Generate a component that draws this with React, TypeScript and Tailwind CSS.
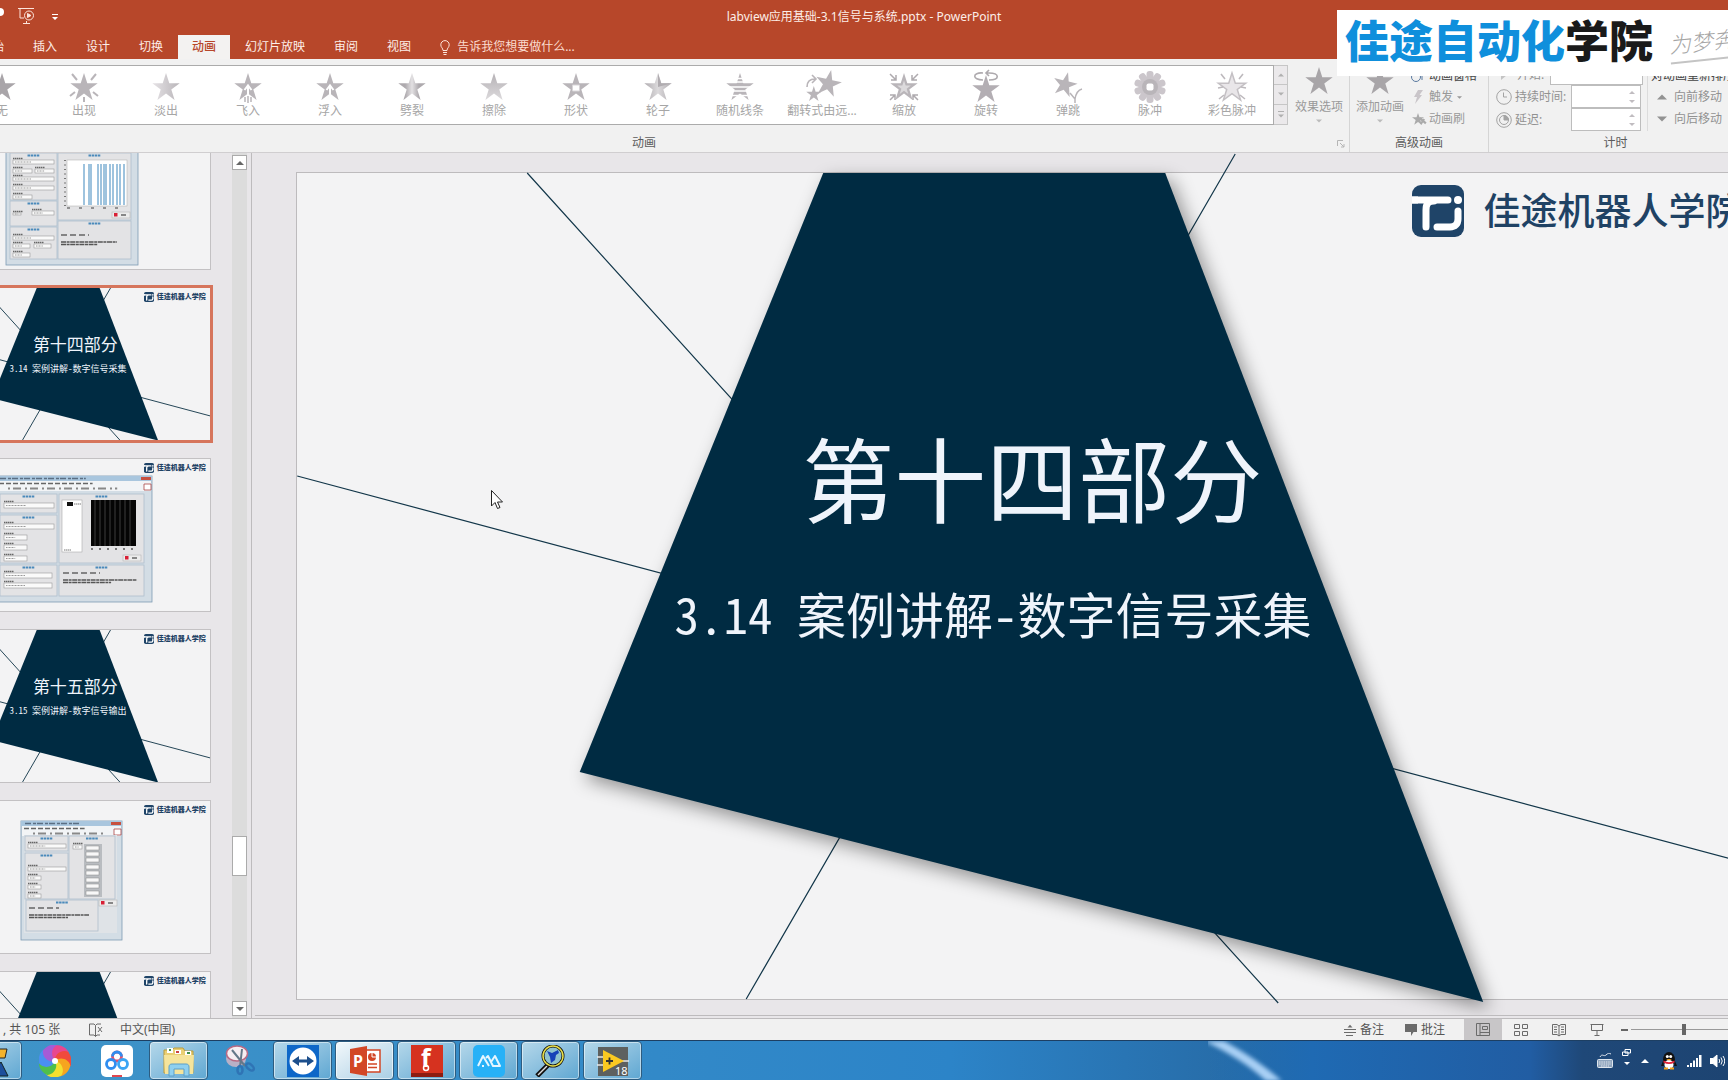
import type { ReactNode } from "react";

const STAR =
  "M16 2l3.3 10.2h10.4l-8.4 6.3 3.3 10.5L16 22.6 7.4 29l3.3-10.5-8.4-6.3h10.4z";

const tabsBefore = ["开始", "插入", "设计", "切换"];
const tabsAfter = ["幻灯片放映", "审阅", "视图"];

const Star = ({ fill = "#b9b5b9" }: { fill?: string }) => (
  <path d={STAR} fill={fill} />
);

interface Effect {
  label: string;
  icon: ReactNode;
}

const effects: Effect[] = [
  { label: "无", icon: <Star fill="#a9a5a9" /> },
  {
    label: "出现",
    icon: (
      <>
        <Star />
        <path
          d="M4 3l5 6M28 3l-5 6M2 25l5-4M30 25l-5-4M16 26v5"
          stroke="#b9b5b9"
          strokeWidth="2"
        />
      </>
    ),
  },
  { label: "淡出", icon: <Star fill="url(#fadeH)" /> },
  {
    label: "飞入",
    icon: (
      <>
        <Star />
        <path
          d="M16 25V15M12.500 19l3.500-4.500 3.500 4.500"
          stroke="#fff"
          strokeWidth="2"
          fill="none"
        />
        <path d="M13 26v5M16 25v7M19 26v5" stroke="#b9b5b9" strokeWidth="1.500" />
      </>
    ),
  },
  {
    label: "浮入",
    icon: (
      <>
        <Star />
        <path
          d="M16 26V15M12.500 19l3.500-4.500 3.500 4.500"
          stroke="#fff"
          strokeWidth="2"
          fill="none"
        />
      </>
    ),
  },
  { label: "劈裂", icon: <Star fill="url(#splitH)" /> },
  { label: "擦除", icon: <Star fill="url(#fadeV)" /> },
  {
    label: "形状",
    icon: (
      <>
        <Star />
        <path d="M12.500 14h7v6h-7z" fill="#fff" stroke="#d8d5d8" />
      </>
    ),
  },
  {
    label: "轮子",
    icon: (
      <>
        <Star fill="url(#fadeL)" />
        <path d="M16 2l3.300 10.200h10.400L16 16z" fill="#b0acb0" />
      </>
    ),
  },
  {
    label: "随机线条",
    icon: (
      <>
        <Star />
        <path d="M2 7.500h28M2 11h28M2 16h28M2 20h28M2 24.500h28" stroke="#fff" strokeWidth="1.300" />
      </>
    ),
  },
  {
    label: "翻转式由远...",
    icon: (
      <>
        <path d={STAR} fill="#b9b5b9" transform="translate(7 -3) rotate(12 16 16) scale(.95)" />
        <path d={STAR} fill="#b9b5b9" transform="translate(-1 14) scale(.55)" />
        <path d="M1 16c0-6 3-8 8-8M6 4l4 4-4 4" stroke="#b9b5b9" strokeWidth="1.600" fill="none" />
      </>
    ),
  },
  {
    label: "缩放",
    icon: (
      <>
        <Star />
        <path d={STAR} fill="#dcdadc" transform="translate(8 8.500) scale(.5)" />
        <path
          d="M2 3l6 6M8 4v5H3M30 3l-6 6M24 4v5h5M2 29l5-5M2 24h5v5M30 29l-5-5M30 24h-5v5"
          stroke="#aeaaae"
          strokeWidth="1.500"
          fill="none"
        />
      </>
    ),
  },
  {
    label: "旋转",
    icon: (
      <>
        <path d={STAR} fill="#b3aeb3" transform="translate(0 2)" />
        <path
          d="M13 9C2 9 2 1 13 2M19 9c11 0 11-7 0-7h-3M19-1l-3 3 3 3"
          stroke="#aeaaae"
          strokeWidth="1.600"
          fill="none"
        />
      </>
    ),
  },
  {
    label: "弹跳",
    icon: (
      <>
        <path d={STAR} fill="#b9b5b9" transform="translate(-1 -1) rotate(14 14 14) scale(.88)" />
        <path d="M18 22l5 6c1-6 3-9 7-10M23 28v4" stroke="#b9b5b9" strokeWidth="1.500" fill="none" />
      </>
    ),
  },
  {
    label: "脉冲",
    icon: (
      <>
        {[0, 36, 72, 108, 144].map((angle) => (
          <rect
            key={angle}
            x="12.500"
            y="0"
            width="7"
            height="32"
            rx="3"
            fill="#cbc6cb"
            transform={`rotate(${angle} 16 16)`}
          />
        ))}
        <circle cx="16" cy="16" r="8" fill="#b9b5b9" />
        <rect x="12.500" y="12.500" width="7" height="7" rx="2" fill="#fff" />
      </>
    ),
  },
  {
    label: "彩色脉冲",
    icon: (
      <>
        <path d={STAR} fill="#e9e6e9" stroke="#c4c0c4" strokeWidth="1.500" />
        <path
          d="M5 3l4 5M27 3l-4 5M2 17l5-1M30 17l-5-1M3 28l5-4M29 28l-5-4"
          stroke="#bdb9bd"
          strokeWidth="1.600"
        />
      </>
    ),
  },
];

const Caret = ({ up = false, className = "" }: { up?: boolean; className?: string }) => (
  <svg viewBox="0 0 8 4" className={`h-1 w-2 ${className}`} aria-hidden="true">
    <path d={up ? "M0 4l4-4 4 4z" : "M0 0l4 4 4-4z"} fill="currentColor" />
  </svg>
);

const Tab = ({ label, active = false }: { label: string; active?: boolean }) => (
  <button
    className={`h-6 shrink-0 px-[14px] text-xs ${active ? "bg-[#f3f2f1] font-medium text-[#b7472a]" : "text-[#fdeee8]"}`}
  >
    {label}
  </button>
);

const TitleBar = () => (
  <header className="bg-[#b7472a] text-white">
    <div className="relative h-[35px]">
      <div className="absolute top-2 left-0 flex items-start gap-[18px]">
        <div className="flex gap-[14px]">
          <span className="h-2 w-1 rounded-r-full bg-white" />
          <svg viewBox="0 0 16 16" className="h-4 w-4" fill="none" stroke="#fde5dc" aria-hidden="true">
            <path d="M0 .5h16M2 1v9h4M5 15.500h7M8.500 13v2" />
            <circle cx="11" cy="7.500" r="4.500" />
            <path d="M9.500 5.500l3.500 2-3.500 2z" fill="#fde5dc" />
          </svg>
        </div>
        <svg viewBox="0 0 6 6" className="mt-[6px] h-[6px] w-[6px]" fill="#fff" aria-hidden="true">
          <path d="M0 0h6v1H0zM0 3h6L3 6z" />
        </svg>
      </div>
      <h1 className="text-center text-xs leading-[34px] text-[#fdeee8]">
        labview应用基础-3.1信号与系统.pptx - PowerPoint
      </h1>
    </div>
    <nav className="-ml-[34px] flex items-center gap-px">
      {tabsBefore.map((label) => (
        <Tab key={label} label={label} />
      ))}
      <Tab label="动画" active />
      {tabsAfter.map((label) => (
        <Tab key={label} label={label} />
      ))}
      <button className="flex h-6 items-center gap-[7px] pl-[14px] text-xs text-[#fbdcd0]">
        <svg viewBox="0 0 10 15" className="h-[15px] w-[10px]" fill="none" stroke="#fde5dc" aria-hidden="true">
          <path d="M3 10.500C3 8 .8 7.500.8 4.800a4.200 4.200 0 018.400 0C9.200 7.500 7 8 7 10.500zM3 12.500h4M3.500 14.500h3" />
        </svg>
        告诉我您想要做什么...
      </button>
    </nav>
  </header>
);

interface GroupProps {
  label: string;
  className?: string;
  labelClassName?: string;
  children: ReactNode;
}

const Group = ({ label, className = "", labelClassName = "", children }: GroupProps) => (
  <section className={`flex shrink-0 flex-col justify-between ${className}`}>
    {children}
    <h2 className={`text-center text-xs leading-[18px] text-[#5c5c5c] ${labelClassName}`}>{label}</h2>
  </section>
);

const Gallery = () => (
  <div className="flex h-[60px]">
    <div className="-ml-[39px] flex border-y border-r border-[#ababab] bg-white">
      {effects.map((effect) => (
        <button key={effect.label} className="flex w-[82px] shrink-0 flex-col items-center pt-[5px]">
          <svg viewBox="0 0 32 32" className="h-8 w-8 overflow-visible" aria-hidden="true">
            {effect.icon}
          </svg>
          <span className="text-xs leading-4 whitespace-nowrap text-[#a6a6a6]">{effect.label}</span>
        </button>
      ))}
    </div>
    <div className="grid w-[14px] grid-rows-3 divide-y divide-[#c6c6c6] border-y border-r border-[#c6c6c6] bg-[#ebe9eb] text-[#b0b0b0]">
      <button aria-label="上一行" className="flex items-center justify-center">
        <Caret up className="w-[6px]" />
      </button>
      <button aria-label="下一行" className="flex items-center justify-center">
        <Caret className="w-[6px]" />
      </button>
      <button aria-label="其他" className="flex flex-col items-center justify-center gap-[2px]">
        <span className="h-px w-[6px] bg-[#b0b0b0]" />
        <Caret className="w-[6px]" />
      </button>
    </div>
  </div>
);

const LargeButton = ({ label }: { label: string }) => (
  <button className="flex flex-col items-center text-xs text-[#999]">
    <svg viewBox="0 0 32 32" className="h-8 w-8" aria-hidden="true">
      <Star fill="#a8a5a8" />
    </svg>
    <span className="leading-5">{label}</span>
    <Caret className="mt-[2px] w-[6px] text-[#bbb]" />
  </button>
);

const Clock = ({ filled = false }: { filled?: boolean }) => (
  <svg viewBox="0 0 16 16" className="h-4 w-4" fill="none" stroke="#a3a3a3" aria-hidden="true">
    <circle cx="8" cy="8" r="7.300" />
    {filled ? <path d="M8 8V3.500A4.500 4.500 0 0112.500 8z" fill="#a3a3a3" /> : <path d="M7.500 3.500V8H11" />}
    {filled && <circle cx="8" cy="8" r="4.500" />}
  </svg>
);

const Spinner = ({ id }: { id: string }) => (
  <div className="flex h-[23px] w-[70px] border border-[#bdbdbd] bg-white">
    <input id={id} type="text" className="w-0 min-w-0 flex-1 bg-transparent px-1 text-xs outline-none" />
    <div className="flex w-4 flex-col items-center justify-center gap-[6px] text-[#c0bcc0]">
      <Caret up className="h-[3px] w-[6px]" />
      <Caret className="h-[3px] w-[6px]" />
    </div>
  </div>
);

const Ribbon = () => (
  <div className="flex h-[94px] overflow-hidden border-b border-[#d0ced0] bg-[#f1f1f1] pt-[6px]">
    <Group label="动画" className="relative w-[1349px]" labelClassName="pr-[61px]">
      <div className="flex items-start justify-between pr-[6px]">
        <Gallery />
        <LargeButton label="效果选项" />
      </div>
      <button aria-label="动画选项" className="absolute right-1 bottom-1">
        <svg viewBox="0 0 8 8" className="h-2 w-2" fill="none" stroke="#b5b5b5" aria-hidden="true">
          <path d="M.5 6V.5H6M3 3l4 4M7 4v3H4" />
        </svg>
      </button>
    </Group>
    <Group label="高级动画" className="w-[139px] border-l border-[#d5d5d5]">
      <div className="flex gap-[7px] pl-[6px]">
        <LargeButton label="添加动画" />
        <div className="flex flex-col text-xs text-[#999]">
          <button className="flex h-[21px] items-center gap-1 text-[#444]">
            <svg viewBox="0 0 14 14" className="h-[14px] w-[14px]" fill="none" stroke="#5a7aa0" aria-hidden="true">
              <circle cx="5" cy="8" r="4.500" />
              <path d="M11 5v6" />
            </svg>
            动画窗格
          </button>
          <button className="flex h-[22px] items-center gap-1">
            <svg viewBox="0 0 14 14" className="h-[14px] w-[14px]" fill="#c9c5c9" aria-hidden="true">
              <path d="M7 0h5L8.500 5H11l-7 9 2-7H3z" />
            </svg>
            触发
            <Caret className="h-[3px] w-[5px]" />
          </button>
          <button className="flex h-[22px] items-center gap-1">
            <svg viewBox="0 0 32 32" className="h-[14px] w-[14px] overflow-visible" aria-hidden="true">
              <Star fill="#aaa" />
              <path d="M20 14l14 12M30 16l-8 12" stroke="#aaa" strokeWidth="5" />
            </svg>
            动画刷
          </button>
        </div>
      </div>
    </Group>
    <Group label="计时" className="w-[254px] border-l border-[#d5d5d5]">
      <div className="flex gap-1 pl-[7px] text-xs text-[#929292]">
        <div className="flex flex-col">
          <div className="flex h-5 items-center gap-[5px]">
            <span className="flex w-4 justify-center">
              <svg viewBox="0 0 6 10" className="h-[10px] w-[6px]" fill="#c4c4c4" aria-hidden="true">
                <path d="M0 0l6 5-6 5z" />
              </svg>
            </span>
            <label htmlFor="start" className="w-7">
              开始:
            </label>
            <select id="start" className="h-5 w-[93px] appearance-none border border-[#bdbdbd] bg-white" />
          </div>
          <div className="flex h-[23px] items-center gap-[3px]">
            <Clock />
            <label htmlFor="duration" className="w-[53px]">
              持续时间:
            </label>
            <Spinner id="duration" />
          </div>
          <div className="flex h-[23px] items-center gap-[3px]">
            <Clock filled />
            <label htmlFor="delay" className="w-[53px]">
              延迟:
            </label>
            <Spinner id="delay" />
          </div>
        </div>
        <div className="flex flex-col border-l border-[#dcdcdc] pl-[3px] whitespace-nowrap">
          <p className="h-[21px] leading-[21px] text-[#444]">对动画重新排序</p>
          <button className="flex h-[22px] items-center gap-[7px] pl-[6px]">
            <Caret up className="h-[6px] w-[10px]" />
            向前移动
          </button>
          <button className="flex h-[22px] items-center gap-[7px] pl-[6px]">
            <Caret className="h-[6px] w-[10px]" />
            向后移动
          </button>
        </div>
      </div>
    </Group>
  </div>
);

// Channel watermark that floats over the window's top right corner
const Watermark = () => (
  <div className="absolute top-[10px] right-0 flex h-[66px] w-[391px] items-center overflow-hidden bg-white pl-2 whitespace-nowrap">
    <p className="pb-1 text-[44px] leading-none font-black text-[#1a1a1a]">
      <span className="text-[#0f8fdc]">佳途自动化</span>学院
    </p>
    <p className="ml-4 -rotate-6 border-b-2 border-[#c4c4c4] pb-1 text-[22px] leading-7 font-light text-[#a5a5a5] italic">
      为梦奔跑
    </p>
  </div>
);

const LogoMark = ({ className = "" }: { className?: string }) => (
  <svg viewBox="0 0 52 52" className={className} aria-hidden="true">
    <rect width="52" height="52" rx="9" fill="#1f4468" />
    <path
      d="M0 15h36M14 42V25c0-6 2-9 8-9M25 42h13c5 0 8-3 8-8V26"
      fill="none"
      stroke="#fff"
      strokeWidth="7"
      strokeLinecap="round"
    />
    <path d="M0 11.500h6v7H0z" fill="#fff" />
    <circle cx="46" cy="15" r="4" fill="#fff" />
  </svg>
);

const Logo = ({ small = false }: { small?: boolean }) => (
  <div
    className={`absolute top-[1.5%] flex items-center whitespace-nowrap text-[#1f4264] ${small ? "left-[75.5%] gap-[3px]" : "left-[75.9%] gap-5"}`}
  >
    <LogoMark className={small ? "h-[10px] w-[10px]" : "h-[52px] w-[52px]"} />
    <span className={small ? "text-[7px] leading-[14px] font-black" : "text-[37px] leading-[52px] font-medium"}>
      佳途机器人学院
    </span>
  </div>
);

interface SectionSlideProps {
  title?: string;
  number?: string;
  topic?: string;
  small?: boolean;
}

const SectionSlide = ({ title, number, topic, small = false }: SectionSlideProps) => (
  <>
    <svg
      viewBox="0 0 1468 826"
      className={`absolute inset-0 h-full w-full ${small ? "overflow-hidden" : "overflow-visible"}`}
      aria-hidden="true"
    >
      <path
        d="M230 0l751 830M0 303l1468 392M938-19L449 826"
        stroke="#123649"
        strokeWidth={small ? 5 : 1.2}
        fill="none"
      />
      <path
        d="M526 0h342l318 829-903.500-230z"
        fill="#002b42"
        className={small ? "" : "drop-shadow-[6px_7px_9px_rgba(0,0,0,0.4)]"}
      />
    </svg>
    {title && (
      <p
        className={`absolute top-[31.7%] left-[34.4%] leading-none whitespace-nowrap text-[#eff4fb] ${small ? "text-[17px]" : "text-[92px]"}`}
      >
        {title}
      </p>
    )}
    {topic && (
      <p
        className={`absolute top-[50.3%] left-[25.7%] font-['Noto_Sans_CJK_SC',sans-serif] leading-none whitespace-pre text-[#eff4fb] [font-feature-settings:'hwid'] ${small ? "text-[9px]" : "text-[49px]"}`}
      >
        {number} {topic}
      </p>
    )}
    <Logo small={small} />
  </>
);

type Box = [x: number, y: number, w: number, h: number];

const Panels = ({ boxes }: { boxes: Box[] }) =>
  boxes.map(([x, y, w, h]) => (
    <g key={`${x}-${y}`}>
      <rect x={x} y={y} width={w} height={h} fill="#e3e3e5" stroke="#aebfcd" strokeWidth=".8" />
      <path
        d={`M${x + w / 2 - 6} ${y + 2.5}h12`}
        stroke="#4a8abb"
        strokeWidth="2"
        strokeDasharray="2.500 .6"
      />
    </g>
  ));

const Fields = ({ boxes }: { boxes: Box[] }) =>
  boxes.map(([x, y, w, h]) => (
    <g key={`${x}-${y}`}>
      <path d={`M${x} ${y - 1.6}h10`} stroke="#666" strokeWidth="1.500" strokeDasharray="1.500 .5" />
      <rect x={x} y={y} width={w} height={h} fill="#fafafa" stroke="#999" strokeWidth=".6" />
      <path d={`M${x + 2} ${y + h / 2}h${w * 0.4}`} stroke="#999" strokeDasharray="1 .5" />
    </g>
  ));

const WindowFrame = ({ box: [x, y, w, h] }: { box: Box }) => (
  <>
    <rect x={x} y={y} width={w} height={h} fill="#d3dde5" stroke="#7d9bb5" strokeWidth=".8" />
    <rect x={x} y={y} width={w} height="5" fill="#a9c6de" />
    <path d={`M${x + 4} ${y + 2.5}h${w * 0.55}`} stroke="#5b6f84" strokeWidth="1.500" strokeDasharray="6 2 3 1" />
    <path d={`M${x + w - 11} ${y + 2.5}h10`} stroke="#c7503f" strokeWidth="3" />
    <rect x={x + 1} y={y + 5} width={w - 2} height="10" fill="#f2f4f6" />
    <path d={`M${x + 3} ${y + 7.5}h${w * 0.6}`} stroke="#666" strokeWidth="1.500" strokeDasharray="5 2" />
    <path d={`M${x + 12} ${y + 12.5}h${w * 0.7}`} stroke="#888" strokeWidth="2" strokeDasharray="2 3 8 4" />
    <path d={`M${x + w - 8} ${y + 8}h7v6h-7z`} fill="#fff" stroke="#a44" strokeWidth=".8" />
  </>
);

const TextLines = ({ x, y, w }: { x: number; y: number; w: number }) => (
  <>
    <path d={`M${x} ${y}h${w * 0.5}`} stroke="#666" strokeWidth="1.500" strokeDasharray="6 3" />
    <path
      d={`M${x} ${y + 7}h${w}M${x} ${y + 9.5}h${w * 0.65}`}
      stroke="#555"
      strokeWidth="1.300"
      strokeDasharray="5 .6 3 .6"
    />
  </>
);

const Stop = ({ x, y }: { x: number; y: number }) => (
  <>
    <rect x={x} y={y} width="18" height="6" fill="#ececec" stroke="#b5b5b5" strokeWidth=".6" />
    <rect x={x + 2} y={y + 1} width="3.500" height="3.500" fill="#d81f35" />
    <path d={`M${x + 9} ${y + 3}h5`} stroke="#666" strokeWidth="1.500" />
  </>
);

const WaveformSlide = () => (
  <svg viewBox="0 0 270 152" className="h-full w-full" aria-hidden="true">
    <WindowFrame box={[66, 6, 132, 142]} />
    <Panels boxes={[[70, 36, 47, 47], [70, 84, 47, 25], [70, 110, 47, 32], [118, 36, 73, 67], [118, 104, 73, 38]]} />
    <Fields
      boxes={[
        [73, 43, 41, 4],
        [73, 52, 19, 4],
        [95, 52, 19, 4],
        [73, 60, 41, 4],
        [73, 69, 41, 4],
        [73, 78, 19, 4],
        [92, 94, 22, 4],
        [73, 96, 8, 2],
        [73, 119, 41, 4],
        [73, 127, 17, 4],
        [94, 127, 17, 4],
        [73, 136, 17, 4],
      ]}
    />
    <rect x="127" y="43" width="60" height="46" fill="#fff" stroke="#aaa" strokeWidth=".5" />
    <path
      d="M144 47v41M149 47v41M151 47v41M158 47v41M161 47v41M164 47v41M166 47v41M170 47v41M173 47v41M177 47v41M180 47v41M184 47v41"
      stroke="#7fb0d3"
      strokeWidth="1.500"
    />
    <path d="M125 43v46" stroke="#777" strokeWidth="2" strokeDasharray="1 3.500" />
    <path d="M127 91h60" stroke="#777" strokeWidth="1.500" strokeDasharray="3 9" />
    <Stop x={172} y={95} />
    <TextLines x={121} y={118} w={56} />
  </svg>
);

const DigitalInputSlide = () => (
  <svg viewBox="0 0 270 152" className="h-full w-full" aria-hidden="true">
    <WindowFrame box={[56, 17, 156, 126]} />
    <Panels boxes={[[60, 35, 57, 19], [60, 56, 57, 48], [60, 106, 57, 31], [119, 35, 85, 69], [119, 106, 85, 31]]} />
    <Fields
      boxes={[
        [64, 44, 50, 5],
        [64, 65, 50, 5],
        [64, 76, 23, 5],
        [64, 86, 23, 5],
        [64, 97, 23, 5],
        [64, 114, 48, 5],
        [64, 124, 48, 5],
      ]}
    />
    <rect x="122" y="41" width="20" height="52" fill="#fff" stroke="#aaa" strokeWidth=".6" />
    <path d="M127 43h6v4h-6z" fill="#111" />
    <path d="M134 45h7M124 91h7" stroke="#777" strokeDasharray="1.500 .5" />
    <rect x="151" y="41" width="45" height="46" fill="#050505" />
    <path d="M155 41v46M160 41v46M165 41v46M170 41v46M175 41v46M180 41v46M185 41v46M190 41v46" stroke="#4b4b4b" strokeWidth=".8" />
    <path d="M151 90h45" stroke="#555" strokeWidth="1.500" strokeDasharray="2 6" />
    <Stop x={183} y={96} />
    <TextLines x={123} y={114} w={74} />
  </svg>
);

const DigitalOutputSlide = () => (
  <svg viewBox="0 0 270 152" className="h-full w-full" aria-hidden="true">
    <WindowFrame box={[81, 20, 101, 119]} />
    <rect x="84" y="34" width="93" height="98" fill="#dfe3e7" />
    <Panels boxes={[[85, 35, 43, 15], [85, 52, 43, 46], [129, 35, 46, 63], [86, 99, 72, 31]]} />
    <Fields
      boxes={[
        [88, 43, 38, 4],
        [88, 66, 38, 4],
        [88, 75, 13, 4],
        [88, 84, 13, 4],
        [88, 93, 13, 4],
        [133, 44, 9, 4],
      ]}
    />
    <rect x="144" y="43" width="18" height="53" fill="#b9bcc0" />
    {[45, 51, 57, 64, 70, 77, 83, 90].map((y) => (
      <rect key={y} x="146" y={y} width="13" height="4" fill="#f8f8f8" stroke="#888" strokeWidth=".5" />
    ))}
    <Stop x={159} y={99} />
    <TextLines x={89} y={107} w={60} />
  </svg>
);

const thumbnails = [
  { id: "waveform", content: <WaveformSlide /> },
  {
    id: "part14",
    selected: true,
    content: <SectionSlide small title="第十四部分" number="3.14" topic="案例讲解-数字信号采集" />,
  },
  {
    id: "input",
    content: (
      <>
        <DigitalInputSlide />
        <Logo small />
      </>
    ),
  },
  {
    id: "part15",
    content: <SectionSlide small title="第十五部分" number="3.15" topic="案例讲解-数字信号输出" />,
  },
  {
    id: "output",
    content: (
      <>
        <DigitalOutputSlide />
        <Logo small />
      </>
    ),
  },
  { id: "part16", content: <SectionSlide small /> },
];

const Sidebar = () => (
  <aside className="flex w-[252px] shrink-0 border-r border-[#bdbbbd]">
    <div className="flex w-[232px] flex-col items-end gap-[19px] overflow-hidden pr-[22px]">
      {thumbnails.map((thumb, index) => (
        <button
          key={thumb.id}
          aria-label={`幻灯片 ${thumb.id}`}
          className={`relative h-[152px] w-[270px] shrink-0 bg-[#f3f3f4] ${index === 0 ? "-mt-9" : ""} ${thumb.selected ? "outline-3 outline-[#d6755c]" : "outline outline-[#c3c1c3]"}`}
        >
          {thumb.content}
        </button>
      ))}
    </div>
    <div className="flex w-[15px] flex-col bg-[#dcdcdc] py-[2px]">
      <button aria-label="向上滚动" className="flex h-[15px] items-center justify-center border border-[#ababab] bg-white text-[#666]">
        <Caret up />
      </button>
      <div className="flex-[665]" />
      <div className="h-10 border border-[#ababab] bg-white" />
      <div className="flex-[125]" />
      <button aria-label="向下滚动" className="flex h-[15px] items-center justify-center border border-[#ababab] bg-white text-[#666]">
        <Caret />
      </button>
    </div>
  </aside>
);

const Editor = () => (
  <main className="relative mb-[2px] ml-[3px] min-w-0 flex-1 overflow-hidden border-b border-[#bdbbbd] pt-5 pb-4 pl-[42px]">
    <div className="relative aspect-video h-full bg-[#f3f3f4] outline outline-[#bdbbbd]">
      <SectionSlide title="第十四部分" number="3.14" topic="案例讲解-数字信号采集" />
    </div>
    <svg viewBox="0 0 12 20" className="absolute top-[337px] left-[236px] h-5 w-3" aria-hidden="true">
      <path d="M.5.500v15.500l3.500-3.500 2.500 6 2.500-1-2.500-5.500h5z" fill="#fff" stroke="#222" />
    </svg>
  </main>
);

const ViewButton = ({ label, active = false, d }: { label: string; active?: boolean; d: string }) => (
  <button aria-label={label} className={`flex h-full w-[38px] items-center justify-center ${active ? "bg-[#c8c6c8]" : ""}`}>
    <svg viewBox="0 0 14 14" className="h-[14px] w-[14px]" fill="none" stroke="#6b6b6b" aria-hidden="true">
      <path d={d} />
    </svg>
  </button>
);

const StatusBar = () => (
  <footer className="flex h-[22px] shrink-0 items-center justify-between overflow-hidden border-t border-[#bdbbbd] bg-[#f1f1f1] text-xs text-[#555]">
    <div className="flex items-center pl-[3px]">
      <span className="w-[86px]">, 共 105 张</span>
      <svg viewBox="0 0 15 14" className="h-[14px] w-[15px]" fill="none" stroke="#6b6b6b" aria-hidden="true">
        <path d="M6.500 2.500L5 1H.5v11H5l1.500 1.500L8 12h3M6.500 2.500v11M6.500 2.500L8 1h4M9 4l4 5M13 4L9 9" />
      </svg>
      <span className="ml-4">中文(中国)</span>
    </div>
    <div className="flex h-full w-[384px] shrink-0 items-center">
      <button className="flex items-center gap-1">
        <svg viewBox="0 0 12 12" className="h-3 w-3" fill="none" stroke="#6b6b6b" aria-hidden="true">
          <path d="M0 5.500h12M0 8.500h12M2 11.500h7" />
          <path d="M3.500 3.500L6 .8l2.500 2.700z" fill="#6b6b6b" stroke="none" />
        </svg>
        备注
      </button>
      <button className="ml-[21px] flex items-center gap-1">
        <svg viewBox="0 0 12 12" className="h-3 w-3" fill="#6b6b6b" aria-hidden="true">
          <path d="M0 0h12v8H8.500L6 12V8H0z" />
        </svg>
        批注
      </button>
      <div className="ml-[19px] flex h-full">
        <ViewButton label="普通" active d="M.5.500h13v12H.5zM4 1v12M4 9.500h9M6.500 3.500h5v3h-5z" />
        <ViewButton label="幻灯片浏览" d="M.5 1.500h5v4h-5zM8.500 1.500h5v4h-5zM.5 8.500h5v4h-5zM8.500 8.500h5v4h-5z" />
        <ViewButton label="阅读视图" d="M7 3L5 1.500H.5v10H5L7 13l2-1.500h4.500v-10H9zM7 3v10M2 4h3M2 6.500h3M2 9h3M9 4h3M9 6.500h3M9 9h3" />
        <ViewButton label="幻灯片放映" d="M.5 1.500h13M1.500 2v5.500h11V2M7 8v4.500M4.500 12.500h5" />
      </div>
      <button aria-label="缩小" className="ml-[5px] flex h-full w-[7px] items-center">
        <span className="h-[2px] w-full bg-[#666]" />
      </button>
      <div className="ml-[3px] flex flex-1 items-center">
        <span className="h-px w-[51px] bg-[#999]" />
        <span className="h-[11px] w-1 bg-[#666]" />
        <span className="h-px flex-1 bg-[#999]" />
      </div>
    </div>
  </footer>
);

interface TaskApp {
  name: string;
  open?: boolean;
  active?: boolean;
  icon: ReactNode;
}

const swirlColors = ["#e8478f", "#f04a3c", "#f6a51f", "#f3df2f", "#4fbf4b", "#4a8ff0", "#a55bd6"];

const taskApps: TaskApp[] = [
  {
    name: "工具",
    open: true,
    icon: (
      <>
        <path d="M18 4h12l-2 9h-9z" fill="#f4b32c" stroke="#222" />
        <path d="M24 17l7 14H14z" fill="#1d4f9c" stroke="#122" />
      </>
    ),
  },
  {
    name: "浏览器",
    icon: (
      <>
        {swirlColors.map((color, i) => (
          <path
            key={color}
            d="M16 16C10 12 11 3 17 0c6 0 11 3 13 8-5-3-12 0-14 8z"
            fill={color}
            transform={`rotate(${i * 51.4} 16 16)`}
          />
        ))}
        <circle cx="16" cy="16" r="3" fill="#fff" />
      </>
    ),
  },
  {
    name: "百度网盘",
    icon: (
      <>
        <rect width="32" height="32" rx="5" fill="#fff" />
        <g fill="none" strokeWidth="2.800">
          <circle cx="16" cy="11.500" r="4.500" stroke="#e8506b" />
          <circle cx="10" cy="19" r="4.500" stroke="#2f8df0" />
          <circle cx="22" cy="19" r="4.500" stroke="#3aa5f4" />
          <path d="M11.500 11.500a4.500 4.500 0 019 0" stroke="#2f8df0" />
        </g>
        <path d="M11 30h10v2H11z" fill="#e0474f" />
      </>
    ),
  },
  {
    name: "资源管理器",
    open: true,
    icon: (
      <>
        <path d="M1 5h8l2-2h9l2 3h8v22H1z" fill="#e9cf74" stroke="#b99b3c" />
        <path d="M4 3h6v5H4zM12 5h6v4h-6zM22 6h6v4h-6z" fill="#fff" />
        <path d="M6 4h2v2H6zM24 7h3v2h-3z" fill="#3f8f4a" />
        <path d="M13 6h3v2h-3z" fill="#c44" />
        <path d="M1 10h30l-1 19H2z" fill="#f5e49c" />
        <path d="M6 31v-9c0-2 1-3 3-3h14c2 0 3 1 3 3v9h-5v-7H11v7z" fill="#8fd0ef" stroke="#5c9fc8" />
      </>
    ),
  },
  {
    name: "截图工具",
    icon: (
      <>
        <ellipse cx="11" cy="14" rx="10" ry="8" fill="#d9b8c6" opacity=".8" />
        <ellipse cx="12" cy="8.500" rx="10.500" ry="7.500" fill="#f6eef2" stroke="#b86a84" strokeWidth="1.500" />
        <path d="M7 5l13 16M17 4l-2 18" stroke="#657889" strokeWidth="2" />
        <ellipse cx="15" cy="25" rx="2.500" ry="4" fill="none" stroke="#2f74b5" strokeWidth="2.500" />
        <ellipse cx="25" cy="22" rx="4.500" ry="2.500" fill="none" stroke="#2f74b5" strokeWidth="2.500" transform="rotate(40 25 22)" />
      </>
    ),
  },
  {
    name: "TeamViewer",
    open: true,
    icon: (
      <>
        <rect width="32" height="32" fill="#0d67c8" />
        <circle cx="16" cy="16" r="13.500" fill="#fff" />
        <path d="M5 16l7-5v3.500h8V11l7 5-7 5v-3.500h-8V21z" fill="#1d4f8c" />
      </>
    ),
  },
  {
    name: "PowerPoint",
    open: true,
    active: true,
    icon: (
      <>
        <path d="M16 5h15v22H16z" fill="#fff" stroke="#d24726" strokeWidth="1.500" />
        <circle cx="23" cy="12" r="4" fill="#d24726" />
        <path d="M23 8v4h4" stroke="#fff" fill="none" />
        <path d="M19 19h9M19 22.500h9" stroke="#d24726" strokeWidth="1.500" />
        <path d="M1 4l17-3v30L1 28z" fill="#d24726" />
        <text x="4" y="22" fontSize="16" fontWeight="bold" fill="#fff">
          P
        </text>
      </>
    ),
  },
  {
    name: "Flash",
    open: true,
    icon: (
      <>
        <rect width="32" height="32" fill="#d6321f" />
        <path d="M0 28h32v4H0z" fill="#8d1c10" />
        <text x="10" y="22" fontSize="25" fontWeight="bold" fill="#fff">
          f
        </text>
        <circle cx="15" cy="23" r="2.500" fill="none" stroke="#fff" strokeWidth="1.500" />
      </>
    ),
  },
  {
    name: "Mindmaster",
    open: true,
    icon: (
      <>
        <rect width="32" height="32" rx="5" fill="#27b1f7" />
        <path
          d="M5 21l5-10 6 10M11 21H9M13 13l2-2 5 10h7l-5-10-4 6"
          stroke="#e6f6ff"
          strokeWidth="2"
          fill="none"
          strokeLinejoin="round"
        />
      </>
    ),
  },
  {
    name: "MAX",
    open: true,
    icon: (
      <>
        <path d="M13 20L2 31" stroke="#111" strokeWidth="5" />
        <path d="M12 21L3 30" stroke="#ddd" strokeWidth="1.500" />
        <circle cx="18" cy="11" r="10" fill="#8fc3cf" stroke="#111" strokeWidth="3" />
        <circle cx="18" cy="11" r="10" fill="none" stroke="#e9e04a" strokeWidth="1.500" />
        <path d="M12 6l5 2 6-3 1 3-3 2-1 5-4 3-1-6z" fill="#1742b8" />
      </>
    ),
  },
  {
    name: "LabVIEW",
    open: true,
    icon: (
      <>
        <rect x="1" y="2" width="30" height="29" fill="#5d605f" />
        <path d="M0 12h6M0 20h6M24 16h8" stroke="#e8e8e8" strokeWidth="1.500" />
        <path d="M6 5l21 11L6 27z" fill="#fbc921" />
        <path d="M9 16h7M12.500 12.500v7" stroke="#333" strokeWidth="1.800" />
        <text x="18" y="30" fontSize="11" fill="#fff">
          18
        </text>
      </>
    ),
  },
];

const Tray = () => (
  <div className="flex items-center pr-[3px] text-white">
    <svg viewBox="0 0 16 16" className="h-4 w-4" fill="none" stroke="#dfe6ee" aria-hidden="true">
      <path d="M3 4c2-4 4 0 6-2s3-2 5-1" />
      <rect x=".5" y="6.500" width="15" height="8" rx="1" fill="#8ea4bd" />
      <path d="M2 9h12M2 11h12M4 13h8" strokeDasharray="1.500 .8" />
    </svg>
    <div className="mb-2 ml-[9px] flex w-[9px] flex-col items-center gap-[6px]">
      <svg viewBox="0 0 9 7" className="h-[7px] w-[9px]" fill="#1d4878" stroke="#fff" aria-hidden="true">
        <path d="M3 .5h5.500v3.500H3zM.5 3h5.500v3.500H.5z" />
      </svg>
      <Caret className="h-[3px] w-[6px]" />
    </div>
    <Caret up className="ml-[10px]" />
    <svg viewBox="0 0 16 18" className="ml-3 h-[18px] w-4" aria-hidden="true">
      <ellipse cx="8" cy="8" rx="6" ry="8" fill="#111" />
      <path d="M2 9L0 14h3zM14 9l2 5h-3z" fill="#111" />
      <ellipse cx="8" cy="12.500" rx="4.500" ry="4.500" fill="#fff" />
      <circle cx="6.300" cy="4.500" r="1.500" fill="#fff" />
      <circle cx="9.700" cy="4.500" r="1.500" fill="#fff" />
      <path d="M5 7h6l-3 1.500z" fill="#f6a51f" />
      <path d="M2.500 8.500q5.500 3.500 11 0v2q-5.500 3-11 0z" fill="#e0243a" />
      <path d="M3 16.500h4M9 16.500h4" stroke="#f6a51f" strokeWidth="2" />
    </svg>
    <svg viewBox="0 0 15 12" className="ml-[10px] h-3 w-[15px]" fill="#fff" aria-hidden="true">
      <path d="M0 10h2v2H0zM3 8h2v4H3zM6 5.500h2V12H6zM9 3h2v9H9zM12 0h2.500v12H12z" />
    </svg>
    <svg viewBox="0 0 15 14" className="ml-2 h-[14px] w-[15px]" fill="none" stroke="#fff" aria-hidden="true">
      <path d="M0 4.500h3L7 1v12L3 9.500H0z" fill="#fff" />
      <path d="M9 5q1.500 2 0 4M11 3.500q2.500 3.500 0 7M13 2q3.500 5 0 10" />
    </svg>
  </div>
);

const Taskbar = () => (
  <div className="relative flex h-10 shrink-0 justify-between overflow-hidden border-t border-[#1d3f63] bg-linear-to-r from-[#3f94c8] via-[#2c84c8] via-55% to-[#1d4472]">
    <svg viewBox="0 0 520 40" className="absolute top-0 right-0 h-10 w-[520px]" aria-hidden="true">
      <defs>
        <linearGradient id="night">
          <stop offset="0" stopColor="#1f70b8" stopOpacity="0" />
          <stop offset=".2" stopColor="#1f6ab3" />
          <stop offset=".62" stopColor="#215da3" />
          <stop offset=".72" stopColor="#1f4878" />
          <stop offset="1" stopColor="#1d4472" />
        </linearGradient>
      </defs>
      <rect width="520" height="40" fill="url(#night)" />
      <path d="M-4 0h20c22 12 42 26 58 40H58C43 26 22 12-4 0z" fill="#a9d0f5" className="blur-[2px]" />
    </svg>
    <div className="relative -ml-[37px] flex gap-[3px]">
      {taskApps.map((app) => (
        <button
          key={app.name}
          aria-label={app.name}
          className={`flex h-[39px] w-[59px] items-center justify-center rounded-sm border ${
            app.active
              ? "border-[#2d5c80] bg-linear-to-br from-[#f3f8fb] to-[#a9cfe4] inset-ring inset-ring-white/60"
              : app.open
                ? "border-[#2d5c80] bg-linear-to-br from-[#b5d8ea] to-[#5ea7d2] inset-ring inset-ring-white/50"
                : "border-transparent"
          }`}
        >
          <svg viewBox="0 0 32 32" className="h-8 w-8" aria-hidden="true">
            {app.icon}
          </svg>
        </button>
      ))}
    </div>
    <div className="relative flex">
      <Tray />
    </div>
  </div>
);

const App = () => (
  <div className="relative flex h-screen flex-col overflow-hidden bg-[#e8e6e9] font-['Noto_Sans','Noto_Sans_CJK_SC',sans-serif]">
    <svg className="absolute h-0 w-0" aria-hidden="true">
      <defs>
        <linearGradient id="fadeH">
          <stop offset="0" stopColor="#e6e3e6" />
          <stop offset="1" stopColor="#b9b5b9" />
        </linearGradient>
        <linearGradient id="fadeL">
          <stop offset="0" stopColor="#b0acb0" />
          <stop offset=".5" stopColor="#dcdadc" />
          <stop offset="1" stopColor="#b0acb0" />
        </linearGradient>
        <linearGradient id="fadeV" x2="0" y2="1">
          <stop offset="0" stopColor="#b5b1b5" />
          <stop offset="1" stopColor="#dcdadc" />
        </linearGradient>
        <linearGradient id="splitH">
          <stop offset=".25" stopColor="#aeaaae" />
          <stop offset=".5" stopColor="#e3e1e3" />
          <stop offset=".75" stopColor="#aeaaae" />
        </linearGradient>
      </defs>
    </svg>
    <TitleBar />
    <Ribbon />
    <div className="flex min-h-0 flex-1">
      <Sidebar />
      <Editor />
    </div>
    <StatusBar />
    <Taskbar />
    <Watermark />
  </div>
);

export default App;
